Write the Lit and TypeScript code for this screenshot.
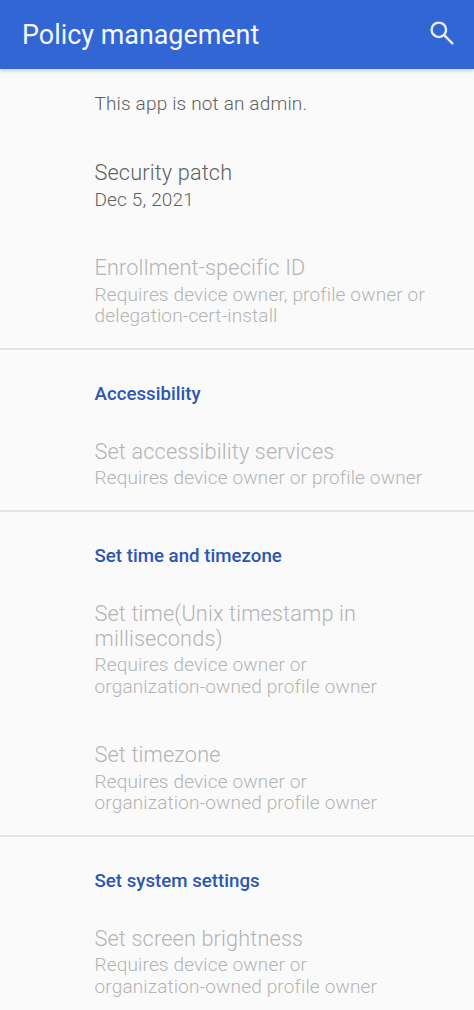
import { LitElement, html, css } from "lit";
import { customElement } from "lit/decorators.js";

type Row = { t: string; s: string };
type Section = { cat: string; rows: Row[] };

const DO = "Requires device owner or\norganization-owned profile owner";

const sections: Section[] = [
  { cat: "Accessibility", rows: [{ t: "Set accessibility services", s: "Requires device owner or profile owner" }] },
  {
    cat: "Set time and timezone",
    rows: [
      { t: "Set time(Unix timestamp in milliseconds)", s: DO },
      { t: "Set timezone", s: DO },
    ],
  },
  { cat: "Set system settings", rows: [{ t: "Set screen brightness", s: DO }] },
];

@customElement("app-root")
export class AppRoot extends LitElement {
  static styles = css`
    :host { display: block; width: 474px; height: 1010px; overflow: hidden; background: #fafafa; font-family: Roboto, "Noto Sans", sans-serif; }
    .bar { height: 69px; background: #3266d5; display: flex; align-items: center; justify-content: space-between; padding: 0 18px 0 22px; box-shadow: 0 2px 4px rgba(0,0,0,.18); position: relative; }
    .bar h1 { margin: 0; color: #f4f7fd; font-size: 26.9px; font-weight: 400; }
    .bar svg { display: block; width: 29px; height: 29px; margin-top: -5px; }
    .sec { padding: 0 44px 0 94.5px; }
    .top { padding-top: 24px; }
    .row { padding-top: 45px; }
    .first { padding-top: 45.5px; }
    .t { font-size: 21.7px; line-height: 25px; font-weight: 300; letter-spacing: .15px; color: #b4b4b4; }
    .s { font-size: 19px; line-height: 21.5px; margin-top: 3.5px; font-weight: 300; letter-spacing: .16px; color: #b4b4b4; white-space: pre-line; }
    .on { color: #5f5f5f; }
    .top .s { margin-top: 0; }
    .div { height: 2px; background: #e3e3e3; margin-top: 21px; }
    .cat { color: #2b57b0; font-size: 18.7px; font-weight: 500; line-height: 24px; padding-top: 32px; }
    .after { padding-top: 33px; }
  `;
  render() {
    return html`
      <div class="bar">
        <h1>Policy management</h1>
        <svg viewBox="0 0 24 24" fill="none" stroke="#e6eefc" stroke-width="2"><circle cx="9.8" cy="9.8" r="6"/><path d="M14.2 14.2 21 21" stroke-linecap="round"/></svg>
      </div>
      <div class="sec top">
        <div class="s on">This app is not an admin.</div>
      </div>
      <div class="sec">
        <div class="first"><div class="t on">Security patch</div><div class="s on">Dec 5, 2021</div></div>
        <div class="row"><div class="t">Enrollment-specific ID</div><div class="s">Requires device owner, profile owner or delegation-cert-install</div></div>
      </div>
      ${sections.map(
        (sec) => html`
          <div class="div"></div>
          <div class="sec">
            <div class="cat">${sec.cat}</div>
            ${sec.rows.map(
              (r, i) => html`<div class=${i === 0 ? "after" : "row"}><div class="t">${r.t}</div><div class="s">${r.s}</div></div>`
            )}
          </div>
        `
      )}
    `;
  }
}
